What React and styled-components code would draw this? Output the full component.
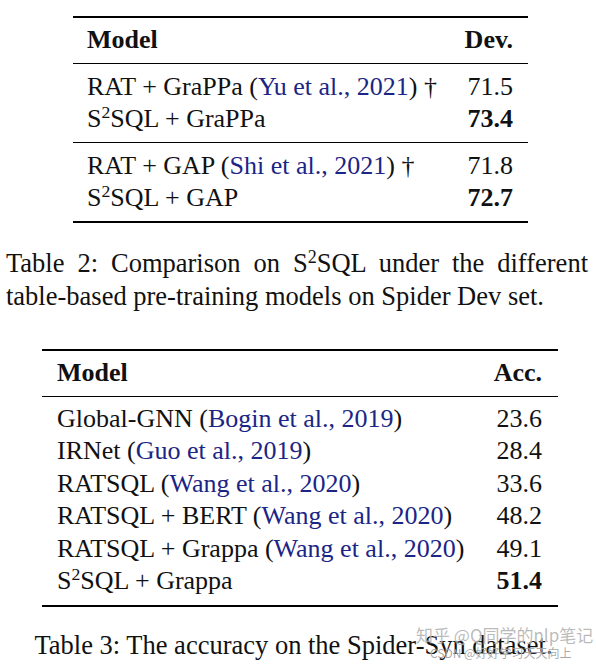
import React from "react";
import styled, { createGlobalStyle } from "styled-components";

const Global = createGlobalStyle`
  html, body { margin: 0; padding: 0; background: #fff; }
`;

const Page = styled.div`
  position: relative;
  width: 596px;
  height: 668px;
  overflow: hidden;
  padding-top: 16px;
  box-sizing: border-box;
  font-family: "Liberation Serif", serif;
  font-size: 26px;
  color: #111;
`;

const Table = styled.div`
  width: ${(p) => p.$width}px;
  margin-left: ${(p) => p.$left}px;
  margin-top: ${(p) => p.$mt ?? 0}px;
  border-top: 2px solid #000;
  border-bottom: 2px solid #000;
`;

const Section = styled.div`
  padding: ${(p) => p.$pt ?? 6}px ${(p) => p.$pr}px ${(p) => p.$pb ?? 7}px ${(p) => p.$pl}px;
  & + & {
    border-top: 1px solid #000;
  }
`;

const Row = styled.div`
  display: flex;
  justify-content: space-between;
  align-items: baseline;
  height: ${(p) => p.$lh ?? 32}px;
  line-height: ${(p) => p.$lh ?? 32}px;
  white-space: nowrap;
`;

const Cell = styled.span`
  font-weight: ${(p) => (p.$bold ? 700 : 400)};
`;

const Cite = styled.span`
  color: #1b2585;
`;

const Sup = styled.span`
  font-size: 0.68em;
  line-height: 0;
  vertical-align: 0.5em;
`;

const Caption = styled.p`
  margin: ${(p) => p.$mt}px ${(p) => p.$mr ?? 8}px 0 6px;
  font-size: 26.5px;
  line-height: 33px;
  text-align: ${(p) => (p.$center ? "center" : "justify")};
  text-align-last: ${(p) => (p.$center ? "center" : "left")};
`;

const Watermark = styled.div`
  position: absolute;
  left: 416px;
  top: 623px;
  color: rgba(140, 140, 140, 0.6);
  font-family: "Noto Sans CJK SC", "Noto Sans", sans-serif;
  white-space: nowrap;
  pointer-events: none;
  text-shadow: 0 0 1px rgba(255, 255, 255, 0.8);
`;

const WmMain = styled.div`
  font-size: 17px;
  line-height: 23px;
`;

const WmSub = styled.div`
  font-size: 12px;
  line-height: 14px;
  margin-left: 14px;
  color: rgba(140, 140, 140, 0.75);
`;

const S2 = () => (
  <>
    S<Sup>2</Sup>SQL
  </>
);

export default function App() {
  return (
    <Page>
      <Global />
      <Table $width={455} $left={73}>
        <Section $pl={14} $pr={15}>
          <Row>
            <Cell $bold>Model</Cell>
            <Cell $bold>Dev.</Cell>
          </Row>
        </Section>
        <Section $pl={14} $pr={15} $pt={7}>
          <Row>
            <Cell>
              RAT + GraPPa (<Cite>Yu et al., 2021</Cite>) †
            </Cell>
            <Cell>71.5</Cell>
          </Row>
          <Row>
            <Cell>
              <S2 /> + GraPPa
            </Cell>
            <Cell $bold>73.4</Cell>
          </Row>
        </Section>
        <Section $pl={14} $pr={15} $pt={7}>
          <Row>
            <Cell>
              RAT + GAP (<Cite>Shi et al., 2021</Cite>) †
            </Cell>
            <Cell>71.8</Cell>
          </Row>
          <Row>
            <Cell>
              <S2 /> + GAP
            </Cell>
            <Cell $bold>72.7</Cell>
          </Row>
        </Section>
      </Table>

      <Caption $mt={24}>
        Table 2: Comparison on <S2 /> under the different table-based
        pre-training models on Spider Dev set.
      </Caption>

      <Table $width={516} $left={42} $mt={36}>
        <Section $pl={15} $pr={16}>
          <Row>
            <Cell $bold>Model</Cell>
            <Cell $bold>Acc.</Cell>
          </Row>
        </Section>
        <Section $pl={15} $pr={16} $pb={8}>
          <Row $lh={32.4}>
            <Cell>
              Global-GNN (<Cite>Bogin et al., 2019</Cite>)
            </Cell>
            <Cell>23.6</Cell>
          </Row>
          <Row $lh={32.4}>
            <Cell>
              IRNet (<Cite>Guo et al., 2019</Cite>)
            </Cell>
            <Cell>28.4</Cell>
          </Row>
          <Row $lh={32.4}>
            <Cell>
              RATSQL (<Cite>Wang et al., 2020</Cite>)
            </Cell>
            <Cell>33.6</Cell>
          </Row>
          <Row $lh={32.4}>
            <Cell>
              RATSQL + BERT (<Cite>Wang et al., 2020</Cite>)
            </Cell>
            <Cell>48.2</Cell>
          </Row>
          <Row $lh={32.4}>
            <Cell>
              RATSQL + Grappa (<Cite>Wang et al., 2020</Cite>)
            </Cell>
            <Cell>49.1</Cell>
          </Row>
          <Row $lh={32.4}>
            <Cell>
              <S2 /> + Grappa
            </Cell>
            <Cell $bold>51.4</Cell>
          </Row>
        </Section>
      </Table>

      <Caption $mt={22} $mr={15} $center>
        Table 3: The accuracy on the Spider-Syn dataset.
      </Caption>

      <Watermark>
        <WmMain>知乎 @Q同学的nlp笔记</WmMain>
        <WmSub>CSDN @好好学习天天向上</WmSub>
      </Watermark>
    </Page>
  );
}
